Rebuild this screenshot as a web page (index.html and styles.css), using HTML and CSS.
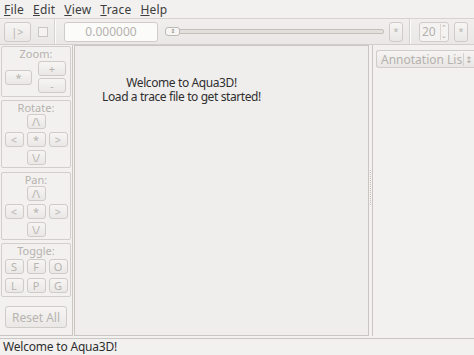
FILE: index.html
```html
<!DOCTYPE html>
<html>
<head>
	<title>Aqua3D</title>
	<link rel="stylesheet" href="styles.css">
</head>
<body>
	<div class="window">
		<div class="menubar">
			<span class="menu"><u>F</u>ile</span>
			<span class="menu"><u>E</u>dit</span>
			<span class="menu"><u>V</u>iew</span>
			<span class="menu"><u>T</u>race</span>
			<span class="menu"><u>H</u>elp</span>
		</div>

		<div class="toolbar">
			<button class="btn play">|&gt;</button>
			<span class="check"></span>
			<span class="sep"></span>
			<div class="field">0.000000</div>
			<div class="slider">
				<span class="groove"></span>
				<span class="handle">III</span>
			</div>
			<button class="btn small">*</button>
			<span class="sep"></span>
			<div class="spin">
				<span class="spin-val">20</span>
				<span class="spin-arrows"><span>&#8963;</span><span>&#8964;</span></span>
			</div>
			<button class="btn small">*</button>
		</div>

		<div class="main">
			<!-- Left control panel -->
			<div class="controls">
				<div class="group zoom">
					<div class="legend">Zoom:</div>
					<div class="zoom-row">
						<button class="btn wide">*</button>
						<div class="zoom-col">
							<button class="btn wide">+</button>
							<button class="btn wide">-</button>
						</div>
					</div>
				</div>

				<div class="group arrows">
					<div class="legend">Rotate:</div>
					<div class="pad">
						<span></span><button class="btn">/\</button><span></span>
						<button class="btn">&lt;</button><button class="btn">*</button><button class="btn">&gt;</button>
						<span></span><button class="btn">\/</button><span></span>
					</div>
				</div>

				<div class="group arrows pan">
					<div class="legend">Pan:</div>
					<div class="pad">
						<span></span><button class="btn">/\</button><span></span>
						<button class="btn">&lt;</button><button class="btn">*</button><button class="btn">&gt;</button>
						<span></span><button class="btn">\/</button><span></span>
					</div>
				</div>

				<div class="group toggle">
					<div class="legend">Toggle:</div>
					<div class="pad">
						<button class="btn">S</button><button class="btn">F</button><button class="btn">O</button>
						<button class="btn">L</button><button class="btn">P</button><button class="btn">G</button>
					</div>
				</div>

				<button class="btn reset">Reset All</button>
			</div>

			<div class="view">
				<p class="welcome">Welcome to Aqua3D!</p>
				<p class="welcome">Load a trace file to get started!</p>
			</div>

			<div class="splitter"><span class="grip"></span></div>

			<div class="side">
				<div class="combo">
					<span class="combo-text">Annotation Lis</span>
					<span class="combo-arrow">&#8597;</span>
				</div>
			</div>
		</div>

		<div class="status">Welcome to Aqua3D!</div>
	</div>
</body>
</html>
```

FILE: styles.css
```css
body { margin: 0; background: #f2f1f0; font-family: "Noto Sans", "DejaVu Sans", sans-serif; color: #3c3c3c; }
.window { width: 474px; height: 355px; display: flex; flex-direction: column; overflow: hidden; }

/* Menu bar */
.menubar { height: 18px; flex: none; display: flex; align-items: center; padding-left: 4px; gap: 9px; font-size: 12px; letter-spacing: 0.2px; background: #f2f1f0; }
.menu { color: #3c3c3c; }
.menu u { text-decoration-thickness: 1px; text-underline-offset: 1px; }

/* Toolbar */
.toolbar {
    height: 27px;
    flex: none;
    border-top: 1px solid #d6d3cf;
    border-bottom: 1px solid #d2cfcb;
    background: linear-gradient(#f0efed, #e9e8e6);
    display: flex;
    align-items: center;
    padding: 0 4px;
    box-sizing: border-box;
}
.btn {
    font-family: inherit;
    font-size: 11px;
    color: #b8b4af;
    background: linear-gradient(#f6f5f4, #eae8e6);
    border: 1px solid #cfcbc6;
    border-radius: 3px;
    padding: 0;
    height: 15px;
    line-height: 13px;
    box-sizing: border-box;
}
.play { width: 27px; height: 20px; }
.check { width: 8px; height: 8px; border: 1px solid #c9c5c0; margin: 0 0 0 7px; background: #f4f3f2; }
.sep { width: 1px; height: 25px; background: #d6d3cf; border-right: 1px solid #fbfbfb; margin: 0 7px 0 6px; }
.field {
    width: 94px; height: 20px; box-sizing: border-box;
    margin-left: 1px;
    background: #fbfbfa; border: 1px solid #d0ccc8; border-radius: 3px;
    font-size: 12px; color: #b5b2ae; text-align: center; line-height: 18px;
}
.slider { position: relative; width: 219px; height: 20px; margin-left: 7px; display: flex; align-items: center; }
.groove { display: block; width: 100%; height: 3px; border: 1px solid #c4c0bb; border-radius: 2px; background: #e2e0dd; }
.handle {
    position: absolute; left: 0; top: 5px;
    width: 15px; height: 9px; box-sizing: border-box;
    border: 1px solid #bdb9b4; border-radius: 3px; background: #f7f6f5;
    font-size: 5px; line-height: 7px; text-align: center; color: #9b9792; letter-spacing: -1px;
}
.small { width: 14px; height: 20px; margin-left: 5px; font-size: 9px; }
.spin {
    width: 30px; height: 20px; box-sizing: border-box; margin-left: 1px;
    border: 1px solid #d0ccc8; border-radius: 3px; background: #f4f3f2;
    display: flex; align-items: center;
}
.spin-val { flex: 1; font-size: 12px; color: #b5b2ae; padding-left: 2px; }
.spin-arrows { width: 7px; display: flex; flex-direction: column; font-size: 7px; line-height: 8px; color: #a9a5a0; border-left: 1px solid #dad7d3; }

/* Main area */
.main { height: 294px; flex: none; display: flex; border-bottom: 1px solid #cac6c2; box-sizing: border-box; overflow: hidden; }
.controls {
    width: 73px; flex: none; box-sizing: border-box;
    border-right: 1px solid #cac6c2; border-bottom: 1px solid #cac6c2;
    padding: 1px 1px 0 1px; margin-bottom: 2px;
    display: flex; flex-direction: column; gap: 3px;
}
.group { border: 1px solid #d2cec9; border-radius: 2px; padding: 0 3px; box-sizing: border-box; }
.zoom { height: 51px; }
.arrows { height: 68px; }
.pan { margin-top: 1px; }
.toggle { height: 54px; }
.legend { font-size: 11px; color: #b6b2ad; text-align: center; line-height: 14px; height: 14px; }
.zoom-row { display: flex; align-items: center; justify-content: space-between; margin-top: 0; padding-right: 1px; }
.zoom-row > .btn { width: 27px; }
.zoom-col { display: flex; flex-direction: column; gap: 2px; }
.zoom-col .btn { width: 28px; height: 15px; }
.pad { display: grid; grid-template-columns: 19px 19px 19px; gap: 3px; justify-content: center; }
.arrows .pad { margin-top: -1px; }
.toggle .pad { margin-top: 1px; row-gap: 4px; }
.reset { width: 62px; height: 22px; margin: 6px 0 0 4px; font-size: 12px; }

.view {
    flex: 1; margin: 0 0 2px 1px;
    border: 1px solid #c9c5c1; background: #efeeec;
    padding: 30px 80px 0 0;
}
.welcome { margin: 0; height: 14px; text-align: center; font-size: 12px; letter-spacing: -0.4px; line-height: 14px; color: #2f2f2f; }
.splitter { width: 3px; margin: 0 0 2px 0; position: relative; }
.grip { position: absolute; left: 1px; top: 125px; width: 1px; height: 35px; border-left: 1px dotted #c4c0bb; }
.side { width: 102px; flex: none; box-sizing: border-box; border-left: 1px solid #c9c5c1; padding: 5px 0 0 3px; margin-bottom: 2px; }
.combo {
    height: 18px; box-sizing: border-box;
    border: 1px solid #d0ccc7; border-right: none; border-radius: 3px 0 0 3px;
    background: linear-gradient(#f6f5f4, #e9e7e5);
    display: flex; align-items: center; overflow: hidden;
}
.combo-text { flex: 1; font-size: 12px; color: #b5b1ac; padding-left: 4px; white-space: nowrap; overflow: hidden; }
.combo-arrow { width: 10px; font-size: 9px; color: #b0aca7; border-left: 1px solid #d5d1cc; text-align: center; }

.status { height: 16px; flex: none; font-size: 12px; letter-spacing: -0.2px; line-height: 15px; padding-left: 3px; color: #2e2e2e; }
```
